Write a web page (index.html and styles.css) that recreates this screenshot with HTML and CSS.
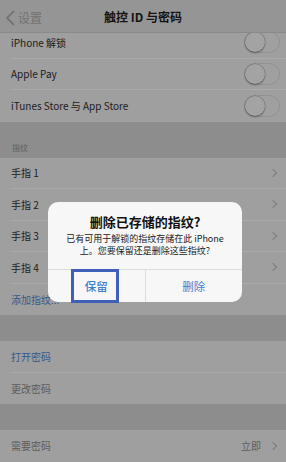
FILE: index.html
```html
<!DOCTYPE html>
<html lang="zh">
<head>
<meta charset="utf-8">
<link rel="stylesheet" href="styles.css">
</head>
<body>
<div class="screen">
  <header class="nav">
    <div class="back">
      <svg class="back-chev" width="10" height="16" viewBox="0 0 10 16"><path d="M8.5 1.5 L2 8 L8.5 14.5" fill="none" stroke="#747474" stroke-width="1.8" stroke-linecap="round" stroke-linejoin="round"/></svg>
      <span>设置</span>
    </div>
    <div class="title">触控 ID 与密码</div>
  </header>

  <section class="group first">
    <div class="row cut"><span class="label">iPhone 解锁</span><span class="switch"><span class="knob"></span></span></div>
    <div class="row"><span class="label">Apple Pay</span><span class="switch"><span class="knob"></span></span></div>
    <div class="row last"><span class="label">iTunes Store 与 App Store</span><span class="switch"><span class="knob"></span></span></div>
  </section>

  <div class="header">指纹</div>
  <section class="group">
    <div class="row"><span class="label">手指 1</span><span class="chev"></span></div>
    <div class="row"><span class="label">手指 2</span><span class="chev"></span></div>
    <div class="row"><span class="label">手指 3</span><span class="chev"></span></div>
    <div class="row"><span class="label">手指 4</span><span class="chev"></span></div>
    <div class="row last"><span class="label link">添加指纹...</span></div>
  </section>

  <div class="gap"></div>
  <section class="group">
    <div class="row"><span class="label link">打开密码</span></div>
    <div class="row last"><span class="label muted">更改密码</span></div>
  </section>

  <div class="gap"></div>
  <section class="group">
    <div class="row last"><span class="label muted">需要密码</span><span class="detail">立即</span><span class="chev"></span></div>
  </section>

  <div class="alert">
    <div class="alert-body">
      <div class="alert-title">删除已存储的指纹?</div>
      <div class="alert-msg">已有可用于解锁的指纹存储在此 iPhone<br>上。您要保留还是删除这些指纹?</div>
    </div>
    <div class="alert-actions">
      <div class="btn keep">保留<span class="mark"></span></div>
      <div class="btn">删除</div>
    </div>
  </div>
</div>
</body>
</html>
```

FILE: styles.css
```css
* { box-sizing: border-box; margin: 0; padding: 0; }
html, body { width: 286px; height: 462px; overflow: hidden; }
body {
  background: #8d8d8d;
  font-family: "Noto Sans CJK SC", "Noto Sans", sans-serif;
  color: #1c1c1c;
}
.screen { position: relative; width: 286px; height: 462px; background: #8d8d8d; }

.nav {
  position: relative;
  z-index: 2;
  height: 33px;
  background: #959595;
  border-bottom: 1px solid #8a8a8a;
  display: flex;
  align-items: center;
  justify-content: center;
}
.back {
  position: absolute;
  left: 5px;
  top: 9px;
  display: flex;
  align-items: center;
  gap: 3px;
  color: #727272;
  font-size: 12px;
}
.title { font-size: 12px; font-weight: 700; color: #141414; }

.group { background: #9f9f9f; }
.group.first { margin-top: -6px; }
.row {
  height: 31.5px;
  margin-left: 11px;
  padding-right: 7px;
  display: flex;
  align-items: center;
  border-bottom: 1px solid #aaaaaa;
}
.row.last { border-bottom: none; }
.label { flex: 1; font-size: 10px; color: #1c1c1c; }
.label.link { color: #35598a; }
.label.muted { color: #5c5c5c; }
.detail { font-size: 10px; color: #5c5c5c; margin-right: 9px; }

.switch {
  position: relative;
  width: 36px;
  height: 22px;
  border-radius: 11px;
  border: 1px solid #929292;
  background: #a0a0a0;
  margin-right: -1px;
}
.knob {
  position: absolute;
  left: 0;
  top: 0;
  width: 20px;
  height: 20px;
  border-radius: 50%;
  background: #a3a3a3;
  box-shadow: 0 1px 2px rgba(0,0,0,0.35), 0 0 0 0.5px rgba(0,0,0,0.2);
}

.chev {
  width: 6px;
  height: 6px;
  border-top: 1.3px solid #7c7c7c;
  border-right: 1.3px solid #7c7c7c;
  transform: rotate(45deg);
  margin-right: 3px;
}

.header {
  height: 36px;
  padding: 20px 0 0 12px;
  font-size: 8px;
  color: #606060;
}
.gap { height: 26px; }

.alert {
  position: absolute;
  left: 48px;
  top: 202px;
  width: 194px;
  height: 100px;
  border-radius: 10px;
  background: #f7f7f7;
  display: flex;
  flex-direction: column;
}
.alert-body {
  height: 68px;
  padding-top: 12px;
  text-align: center;
  border-bottom: 1px solid #dcdcdc;
}
.alert-title { font-size: 13px; font-weight: 700; color: #111; line-height: 16px; }
.alert-msg { font-size: 9px; line-height: 12px; color: #222; margin-top: 3px; }
.alert-actions { flex: 1; display: flex; }
.btn {
  position: relative;
  flex: 1;
  display: flex;
  align-items: center;
  justify-content: center;
  font-size: 11.5px;
  color: #3d7fcf;
}
.btn.keep { border-right: 1px solid #dcdcdc; font-weight: 500; }
.mark {
  position: absolute;
  left: 23px;
  top: -1px;
  width: 48px;
  height: 34px;
  border: 3px solid #3f5fb9;
}
```
